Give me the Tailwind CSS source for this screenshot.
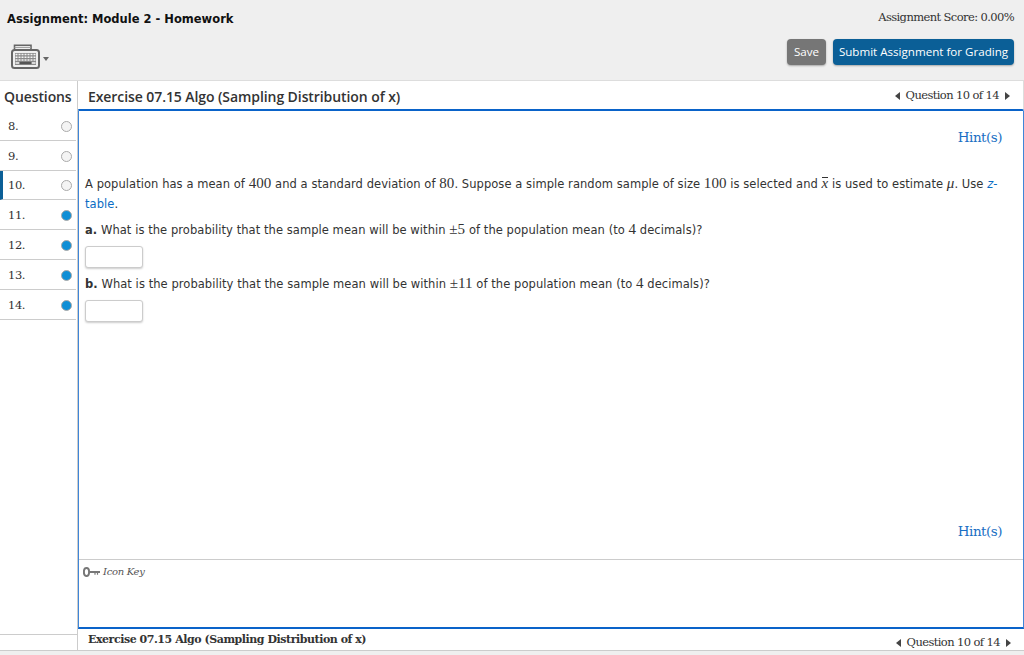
<!DOCTYPE html>
<html lang="en">
<head>
<meta charset="UTF-8" />
<title>Assignment: Module 2 - Homework</title>
<script src="https://cdn.jsdelivr.net/npm/@tailwindcss/browser@4"></script>
</head>
<body class="bg-[#efefef] w-[1024px] h-[655px] overflow-hidden font-['DejaVu_Sans',sans-serif] text-[#333]">
  <!-- top bar -->
  <header class="h-[80px] flex justify-between px-[7px]">
    <div>
      <h1 class="mt-[12px] text-[11.5px] leading-[14px] font-bold text-[#111]">Assignment: Module 2 - Homework</h1>
      <div class="mt-[18px] ml-[4px] flex items-center">
        <svg width="29" height="25" viewBox="0 0 29 25" fill="none">
          <path d="M3.5 5.5V1.2H20V5.5" stroke="#666" stroke-width="1.6"/>
          <path d="M3.5 3.4H20" stroke="#999" stroke-width="1"/>
          <rect x="1" y="6" width="27" height="18" rx="2.5" fill="#efefef" stroke="#666" stroke-width="2"/>
          <rect x="4" y="9" width="21" height="12" fill="#8a8a8a"/>
          <path d="M4.5 10.5H24.5M4.5 13.2H24.5M4.5 16H24.5" stroke="#f4f4f4" stroke-width="1.5" stroke-dasharray="2 1"/>
          <path d="M4.5 19H8M21 19H24.5" stroke="#f4f4f4" stroke-width="1.6"/>
          <path d="M9 19H20" stroke="#555" stroke-width="2.2"/>
        </svg>
        <span class="ml-[3px] mt-[4px] w-0 h-0 border-x-[3.5px] border-x-transparent border-t-[4px] border-t-[#666]"></span>
      </div>
    </div>
    <div class="flex flex-col items-end pr-[3px]">
      <p class="mt-[9px] text-[11.5px] leading-[16px] font-['DejaVu_Serif',serif] tracking-[-0.6px] text-[#333]">Assignment Score: 0.00%</p>
      <div class="mt-[14px] flex gap-[7px]">
        <button class="h-[26px] w-[39px] rounded-[4px] bg-[#767676] text-white text-[11.6px] font-['Open_Sans',sans-serif] shadow-[0_1px_2px_rgba(0,0,0,.3)]">Save</button>
        <button class="h-[26px] w-[181px] rounded-[4px] bg-[#0b5f97] text-white text-[11.6px] font-['Open_Sans',sans-serif] shadow-[0_1px_2px_rgba(0,0,0,.3)]">Submit Assignment for Grading</button>
      </div>
    </div>
  </header>

  <!-- title row -->
  <div class="h-[30px] flex bg-white border-t border-[#ddd] border-r border-r-[#ddd]">
    <div class="w-[78px] shrink-0 border-r border-[#ccc] pl-[4px] pt-[7px] text-[14px] leading-[18px] font-semibold font-['Open_Sans',sans-serif] tracking-[-0.1px] text-[#333]">Questions</div>
    <div class="flex-1 flex justify-between pl-[10px] pr-[13px] pt-[7px]">
      <h2 class="text-[14px] leading-[18px] font-semibold font-['Open_Sans',sans-serif] tracking-[-0.08px] text-[#333]">Exercise 07.15 Algo (Sampling Distribution of x)</h2>
      <div class="flex items-center h-[14px] gap-[6px] mt-[1px] text-[11.5px] font-['DejaVu_Serif',serif] tracking-[-0.6px] text-[#333]">
        <span class="w-0 h-0 border-y-[4px] border-y-transparent border-r-[5px] border-r-[#444]"></span>
        <span>Question 10 of 14</span>
        <span class="w-0 h-0 border-y-[4px] border-y-transparent border-l-[5px] border-l-[#444]"></span>
      </div>
    </div>
  </div>

  <div class="flex bg-white h-[520px]">
    <!-- question list -->
    <ul class="w-[78px] shrink-0 pt-[1px] border-r border-[#ccc] text-[11.5px] font-['DejaVu_Serif',serif] tracking-[-0.4px] text-[#333]">
      <li class="h-[30px] pt-[1px] flex items-center justify-between border-b border-[#ccc] pl-[8px] pr-[4px] mr-[1px]"><span class="mt-[2px]">8.</span><span class="size-[11px] rounded-full bg-[#f4f4f4] border border-[#aaa]"></span></li>
      <li class="h-[30px] pt-[1px] flex items-center justify-between border-b border-[#ccc] pl-[8px] pr-[4px] mr-[1px]"><span class="mt-[2px]">9.</span><span class="size-[11px] rounded-full bg-[#f4f4f4] border border-[#aaa]"></span></li>
      <li class="h-[29px] pt-[1px] flex items-center justify-between border-b border-[#ccc] border-l-[3px] border-l-[#0b5f97] pl-[5px] pr-[4px] mr-[1px]"><span>10.</span><span class="size-[11px] rounded-full bg-[#f4f4f4] border border-[#aaa]"></span></li>
      <li class="h-[30px] pt-[1px] flex items-center justify-between border-b border-[#ccc] pl-[8px] pr-[4px] mr-[1px]"><span class="mt-[2px]">11.</span><span class="size-[11px] rounded-full bg-[#0f8fd6] border border-[#aaa]"></span></li>
      <li class="h-[30px] pt-[1px] flex items-center justify-between border-b border-[#ccc] pl-[8px] pr-[4px] mr-[1px]"><span class="mt-[2px]">12.</span><span class="size-[11px] rounded-full bg-[#0f8fd6] border border-[#aaa]"></span></li>
      <li class="h-[30px] pt-[1px] flex items-center justify-between border-b border-[#ccc] pl-[8px] pr-[4px] mr-[1px]"><span class="mt-[2px]">13.</span><span class="size-[11px] rounded-full bg-[#0f8fd6] border border-[#aaa]"></span></li>
      <li class="h-[30px] pt-[1px] flex items-center justify-between border-b border-[#ccc] pl-[8px] pr-[4px] mr-[1px]"><span class="mt-[2px]">14.</span><span class="size-[11px] rounded-full bg-[#0f8fd6] border border-[#aaa]"></span></li>
    </ul>

    <!-- main panel -->
    <main class="flex-1 min-w-0 -mt-[1px] h-[520px] flex flex-col border border-[#0a63c9] border-l-[#3f86d8] border-r-[#3f86d8] border-t-2 border-b-2 rounded-tr-[2px]">
      <div class="flex-1 flex flex-col pl-[6px] pr-[21px]">
        <a class="self-end mt-[17px] text-[13.5px] leading-[18px] font-['DejaVu_Serif',serif] tracking-[-0.5px] text-[#1a6fc4]">Hint(s)</a>
        <div class="mt-[28px] text-[11.5px] leading-[20px] tracking-[0.06px]">
          <p>A population has a mean of <span class="font-['Liberation_Serif',serif] text-[15px] leading-none">400</span> and a standard deviation of <span class="font-['Liberation_Serif',serif] text-[15px] leading-none">80</span>. Suppose a simple random sample of size <span class="font-['Liberation_Serif',serif] text-[15px] leading-none">100</span> is selected and <span class="inline-block border-t border-[#333] font-['Liberation_Serif',serif] italic text-[15px] leading-[11px]">x</span> is used to estimate <span class="font-['Liberation_Serif',serif] italic text-[15px] leading-none">μ</span>. Use <a class="text-[#0a6cc4]"><i>z</i>-table</a>.</p>
          <p class="mt-[6px]"><b>a.</b> What is the probability that the sample mean will be within <span class="font-['Liberation_Serif',serif] text-[15px] leading-none">±5</span> of the population mean (to <span class="font-['Liberation_Serif',serif] text-[15px] leading-none">4</span> decimals)?</p>
          <div class="mt-[6px] h-[22px] w-[58px] rounded-[3px] border border-[#ccc] bg-white shadow-[0_1px_2px_rgba(0,0,0,.2)]"></div>
          <p class="mt-[6px]"><b>b.</b> What is the probability that the sample mean will be within <span class="font-['Liberation_Serif',serif] text-[15px] leading-none">±11</span> of the population mean (to <span class="font-['Liberation_Serif',serif] text-[15px] leading-none">4</span> decimals)?</p>
          <div class="mt-[6px] h-[22px] w-[58px] rounded-[3px] border border-[#ccc] bg-white shadow-[0_1px_2px_rgba(0,0,0,.2)]"></div>
        </div>
        <a class="self-end mt-auto mb-[19px] text-[13.5px] leading-[18px] font-['DejaVu_Serif',serif] tracking-[-0.5px] text-[#1a6fc4]">Hint(s)</a>
      </div>
      <div class="h-[68px] border-t border-[#ccc] pl-[4px] pt-[5px] flex items-start gap-[3px]">
        <svg width="17" height="12" viewBox="0 0 17 12" fill="none" class="mt-[1px]">
          <ellipse cx="3.5" cy="6" rx="2.6" ry="4" stroke="#777" stroke-width="2"/>
          <path d="M6 6H17" stroke="#777" stroke-width="2"/>
          <path d="M12 7V8.8M14.5 7V8.8" stroke="#777" stroke-width="1.2"/>
        </svg>
        <span class="text-[10px] leading-[14px] italic font-['DejaVu_Serif',serif] tracking-[-0.3px] text-[#555]">Icon Key</span>
      </div>
    </main>
  </div>

  <!-- footer -->
  <footer class="h-[21px] flex bg-white border-b border-[#ccc]">
    <div class="w-[78px] shrink-0 border-r border-[#ccc]">
      <div class="mt-[4px] border-t border-[#ccc]"></div>
    </div>
    <div class="flex-1 flex justify-between pl-[10px] pr-[13px]">
      <h2 class="mt-[1px] text-[11px] leading-[17px] font-bold font-['DejaVu_Serif',serif] tracking-[-0.45px] text-[#333]">Exercise 07.15 Algo (Sampling Distribution of x)</h2>
      <div class="flex items-center h-[14px] gap-[6px] mt-[6px] text-[11.5px] font-['DejaVu_Serif',serif] tracking-[-0.6px] text-[#333]">
        <span class="w-0 h-0 border-y-[4px] border-y-transparent border-r-[5px] border-r-[#444]"></span>
        <span>Question 10 of 14</span>
        <span class="w-0 h-0 border-y-[4px] border-y-transparent border-l-[5px] border-l-[#444]"></span>
      </div>
    </div>
  </footer>
</body>
</html>
